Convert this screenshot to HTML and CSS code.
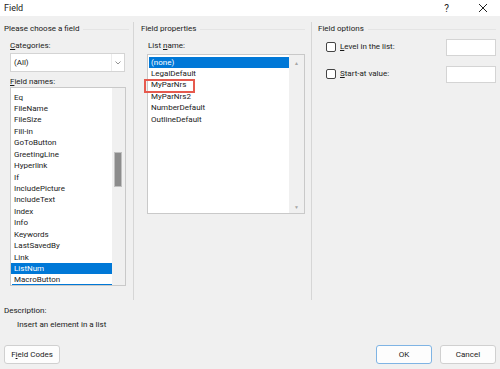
FILE: index.html
```html
<!DOCTYPE html>
<html lang="en">
<head>
    <meta charset="UTF-8">
    <title>Field</title>
    <link rel="stylesheet" href="styles.css">
</head>
<body>
    <div class="dialog">
        <div class="titlebar">
            <span class="title">Field</span>
            <span class="help">?</span>
            <svg class="close" width="10" height="10" viewBox="0 0 10 10">
                <path d="M1 1 L9 9 M9 1 L1 9" stroke="#222" stroke-width="1" fill="none"/>
            </svg>
        </div>

        <div class="main">
            <!-- left column -->
            <div class="col col-fields">
                <div class="group-title">Please choose a field</div>
                <div class="label"><u>C</u>ategories:</div>
                <div class="combo">
                    <span class="combo-value">(All)</span>
                    <span class="combo-arrow">
                        <svg width="6" height="4" viewBox="0 0 6 4">
                            <path d="M0.5 0.5 L3 3 L5.5 0.5" stroke="#777" stroke-width="0.8" fill="none"/>
                        </svg>
                    </span>
                </div>
                <div class="label label-names"><u>F</u>ield names:</div>
                <div class="listbox names">
                    <ul class="items">
                        <li>Eq</li>
                        <li>FileName</li>
                        <li>FileSize</li>
                        <li>Fill-in</li>
                        <li>GoToButton</li>
                        <li>GreetingLine</li>
                        <li>Hyperlink</li>
                        <li>If</li>
                        <li>IncludePicture</li>
                        <li>IncludeText</li>
                        <li>Index</li>
                        <li>Info</li>
                        <li>Keywords</li>
                        <li>LastSavedBy</li>
                        <li>Link</li>
                        <li class="selected">ListNum</li>
                        <li>MacroButton</li>
                    </ul>
                    <div class="vscroll">
                        <div class="thumb"></div>
                    </div>
                    <div class="focus-line"></div>
                </div>
            </div>

            <div class="sep"></div>

            <!-- middle column -->
            <div class="col col-props">
                <div class="group-title">Field properties</div>
                <div class="indent">
                    <div class="label">List <u>n</u>ame:</div>
                    <div class="listbox lists">
                        <ul class="items">
                            <li class="selected">(none)</li>
                            <li>LegalDefault</li>
                            <li>MyParNrs</li>
                            <li>MyParNrs2</li>
                            <li>NumberDefault</li>
                            <li>OutlineDefault</li>
                        </ul>
                        <div class="vscroll arrows">
                            <span class="arrow">&#9650;</span>
                            <span class="arrow">&#9660;</span>
                        </div>
                        <div class="mark"></div>
                    </div>
                </div>
            </div>

            <div class="sep"></div>

            <!-- right column -->
            <div class="col col-options">
                <div class="group-title">Field options</div>
                <div class="option">
                    <span class="check"></span>
                    <span class="option-label"><u>L</u>evel in the list:</span>
                    <span class="textbox"></span>
                </div>
                <div class="option option-second">
                    <span class="check"></span>
                    <span class="option-label"><u>S</u>tart-at value:</span>
                    <span class="textbox"></span>
                </div>
            </div>
        </div>

        <div class="description">
            <div>Description:</div>
            <div class="description-text">Insert an element in a list</div>
        </div>

        <div class="footer">
            <button class="btn">F<u>i</u>eld Codes</button>
            <span class="spacer"></span>
            <button class="btn btn-default">OK</button>
            <button class="btn">Cancel</button>
        </div>
    </div>
</body>
</html>
```

FILE: styles.css
```css
body {
    margin: 0;
    padding: 0;
    background-color: #f0f0f0;
    font-family: Roboto, "Noto Sans", sans-serif;
    font-size: 8px;
    color: #1a1a1a;
}

u {
    text-decoration: underline;
    text-underline-offset: 1px;
}

.dialog {
    width: 500px;
    height: 369px;
    display: flex;
    flex-direction: column;
    overflow: hidden;
}

/* title bar */
.titlebar {
    height: 16px;
    background: #ffffff;
    display: flex;
    align-items: center;
    padding: 0 0 0 4px;
}

.title {
    font-size: 9px;
    flex: 1;
}

.help {
    font-size: 10px;
    margin-right: 29px;
}

.close {
    margin-right: 12px;
}

/* main area */
.main {
    height: 284px;
    display: grid;
    grid-template-columns: 133px 1px 177px 1px 1fr;
}

.sep {
    margin-top: 6px;
    background: #d6d6d6;
}

.col {
    padding-top: 7px;
}

.group-title {
    height: 12px;
    line-height: 12px;
    display: flex;
    align-items: center;
    gap: 4px;
}

.group-title::after {
    content: "";
    flex: 1;
    height: 1px;
    background: #e4e4e4;
}

.label {
    height: 12px;
    line-height: 12px;
    margin-top: 5px;
}

/* left column */
.col-fields {
    padding-left: 4px;
    padding-right: 4px;
}

.col-fields .label,
.combo,
.names {
    margin-left: 6px;
}

.combo {
    margin-top: 1px;
    width: 115px;
    height: 19px;
    box-sizing: border-box;
    background: #fff;
    border: 1px solid #d4d4d4;
    display: flex;
    align-items: center;
}

.combo-value {
    flex: 1;
    padding-left: 3px;
}

.combo-arrow {
    width: 12px;
    height: 100%;
    border-left: 1px solid #ececec;
    display: flex;
    align-items: center;
    justify-content: center;
}

.label-names {
    margin-top: 4px;
}

.listbox {
    position: relative;
    background: #fff;
    border: 1px solid #c9c9c9;
    box-sizing: border-box;
    display: flex;
}

.names {
    margin-top: -1px;
    width: 116px;
    height: 199px;
}

.items {
    list-style: none;
    margin: 0;
    padding: 0;
    flex: 1;
    overflow: hidden;
}

.items li {
    height: 11.43px;
    line-height: 11.43px;
    padding-left: 3px;
    white-space: nowrap;
}

.items li.selected {
    background: #0078d7;
    color: #fff;
}

.names .items {
    padding-top: 3.6px;
}

.vscroll {
    width: 13px;
    background: #f0f0f0;
    position: relative;
}

.thumb {
    position: absolute;
    left: 2px;
    top: 64px;
    width: 8px;
    height: 35px;
    background: #8c8c8c;
    border: 1px solid #c0c0c0;
    box-sizing: border-box;
}

.focus-line {
    position: absolute;
    left: 1px;
    bottom: 0;
    width: 100px;
    height: 1px;
    background: #0078d7;
}

/* middle column */
.col-props {
    padding-left: 7px;
    padding-right: 6px;
}

.indent {
    margin-left: 6px;
}

.col-props .label {
    margin-left: 1px;
}

.lists {
    margin-top: 2px;
    width: 158px;
    height: 160px;
}

.lists .items {
    padding: 1.5px 0 0 1px;
}

.lists .items li {
    padding-left: 2px;
}

.arrows {
    width: 15px;
    display: flex;
    flex-direction: column;
    justify-content: space-between;
    align-items: center;
    padding: 5px 0 3px;
    box-sizing: border-box;
}

.arrow {
    font-size: 5px;
    line-height: 6px;
    color: #a6a6a6;
}

.mark {
    position: absolute;
    left: -4px;
    top: 24px;
    width: 51px;
    height: 14px;
    border: 2px solid #e65a4e;
    box-sizing: border-box;
}

/* right column */
.col-options {
    padding-left: 6px;
    padding-right: 4px;
}

.option {
    display: flex;
    align-items: center;
    height: 17px;
    margin-top: 4px;
    padding-left: 8px;
}

.option-second {
    margin-top: 10px;
}

.check {
    width: 10px;
    height: 10px;
    box-sizing: border-box;
    border: 1px solid #444;
    border-radius: 2px;
    background: #fff;
    margin-bottom: 2px;
}

.option-label {
    flex: 1;
    margin-left: 4px;
    margin-bottom: 2px;
}

.textbox {
    width: 50px;
    height: 17px;
    box-sizing: border-box;
    background: #fff;
    border: 1px solid #d4d4d4;
}

/* description */
.description {
    height: 45px;
    box-sizing: border-box;
    padding: 4.7px 0 0 4px;
    line-height: 12px;
}

.description-text {
    margin-top: 2.3px;
    padding-left: 13px;
}

/* buttons */
.footer {
    height: 19px;
    display: flex;
    gap: 8px;
    padding: 0 4px;
}

.spacer {
    flex: 1;
}

.btn {
    width: 56px;
    height: 19px;
    padding: 0;
    font-family: inherit;
    font-size: 8px;
    color: #1a1a1a;
    background: #fdfdfd;
    border: 1px solid #d0d0d0;
    border-radius: 3px;
}

.btn-default {
    border-color: #7fb4e4;
}
```
